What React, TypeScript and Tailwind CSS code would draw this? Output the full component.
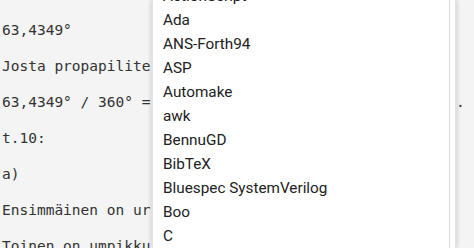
const lines = [
  'Vastaus: kulma on siis ylöspäin',
  '63,4349°',
  'Josta propapiliterin kulma lasketaan näin',
  '63,4349° / 360° = 0,176208 eli noin 17,6 % ympyrästä.',
  't.10:',
  'a)',
  'Ensimmäinen on urheilukulma',
  'Toinen on umpikkulma',
]

const langs = [
  'ActionScript',
  'Ada',
  'ANS-Forth94',
  'ASP',
  'Automake',
  'awk',
  'BennuGD',
  'BibTeX',
  'Bluespec SystemVerilog',
  'Boo',
  'C',
]

export default function App() {
  return (
    <div className="relative w-[474px] h-[248px] overflow-hidden bg-[#f4f4f4]">
      {/* taustalla oleva teksti */}
      <div className="-mt-[24px] pl-[2px] font-['DejaVu_Sans_Mono',monospace] text-[14.5px] text-[#333]">
        {lines.map((l, i) => (
          <div key={i} className="h-[36px] leading-[36px] whitespace-nowrap">{l}</div>
        ))}
      </div>

      {/* pudotusvalikko */}
      <div className="absolute left-[151px] top-0 w-[306px] h-[248px] bg-white border-l-2 border-r-2 border-[#e2e2e2] shadow-[0_0_4px_rgba(0,0,0,0.18)] overflow-hidden">
        <div className="flex">
          <ul className="flex-1 -mt-[16px] pl-[10px] font-['Roboto',sans-serif] text-[15.3px] text-[#222]">
            {langs.map(l => (
              <li key={l} className="h-[24px] leading-[24px] whitespace-nowrap">{l}</li>
            ))}
          </ul>
          <div className="w-[6px] h-[248px] border-l border-[#dcdcdc]" />
        </div>
      </div>
    </div>
  )
}
